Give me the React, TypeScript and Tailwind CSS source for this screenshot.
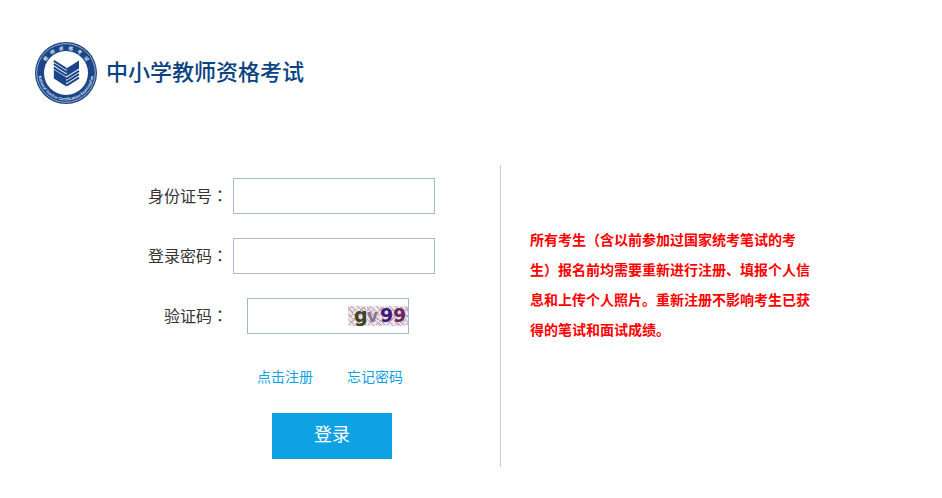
import { useState } from "react";

interface IField {
  id: string;
  label: string;
  type: string;
}

const fields: IField[] = [
  { id: "idCard", label: "身份证号", type: "text" },
  { id: "password", label: "登录密码", type: "password" },
];

const emblemChars = ["教", "师", "资", "格", "考", "试"];

const Emblem = () => (
  <svg viewBox="0 0 62 62" className="size-[62px]" aria-hidden="true">
    <defs>
      <path id="arc-bottom" d="M3.5 31a27.5 27.5 0 0 0 55 0" />
    </defs>
    <circle cx="31" cy="31" r="31" fill="#1c4587" />
    <circle cx="31" cy="31" r="29.3" fill="none" stroke="#b4c4dc" strokeWidth="0.8" />
    <circle cx="31" cy="31" r="22" fill="#fff" />
    <g fill="#dbe5f2" fontFamily="'Noto Sans CJK SC', sans-serif" textAnchor="middle">
      {emblemChars.map((char, i) => (
        <text
          key={char}
          x="31"
          y="7.8"
          fontSize="4.6"
          fontWeight="700"
          transform={`rotate(${(i - 2.5) * 22} 31 31)`}
        >
          {char}
        </text>
      ))}
      <text fontSize="3.8" fontWeight="700">
        <textPath href="#arc-bottom" startOffset="50%">
          National Teacher Certification Examination
        </textPath>
      </text>
    </g>
    <g fill="#1c4587">
      <path d="M44 18.5l-12.6 8v8l12.600-8z" />
      <path d="M18.800 27.500l12.600 8v9l-12.600-8z" />
    </g>
    <g fill="none" stroke="#1c4587" strokeWidth="2">
      <path d="M18.8 18.8l12.6 8M18.8 22.2l12.6 8M18.8 25.6l12.6 8" />
      <path d="M44 28.800l-12.6 8M44 32.2l-12.6 8M44 35.6l-12.6 8" />
    </g>
  </svg>
);

const Captcha = () => (
  <svg viewBox="0 0 60 20" className="h-5 w-[60px] overflow-visible">
    <defs>
      <pattern id="noise" width="19" height="20" patternUnits="userSpaceOnUse">
        <path
          d="M0 1l5 6M3 0l9 8M9 0l8 7M0 8l6 6M11 10l6-5M1 19l7-8M5 15l4-5M10 12l8 7M3 15l4 5M15 10l3 5M14 1l4 3M6 8l5 6M0 5l3-4M12 17l3 3"
          stroke="#b58fb2"
          strokeWidth="0.9"
          fill="none"
        />
        <path
          d="M2 4l4 5M13 2l4 6M0 13l3 3M8 14l5 6M14 14l-5 5M17 1l-6 5M1 11l4-3M7 3l-3 4M16 18l3-4"
          stroke="#9c958f"
          strokeWidth="0.7"
        />
      </pattern>
    </defs>
    <rect width="60" height="20" fill="#f0e4ea" />
    <rect width="60" height="20" fill="url(#noise)" />
    <g fontFamily="'DejaVu Sans', sans-serif" fontSize="19" fontWeight="700">
      <text x="6" y="16" fill="#3c4420">g</text>
      <text x="19" y="16" fill="#84768c" fontSize="17">v</text>
      <text x="32" y="16" fill="#3d1a78">9</text>
      <text x="45" y="16" fill="#642a5c">9</text>
    </g>
  </svg>
);

const FieldLabel = ({ id, label }: { id: string; label: string }) => (
  <label htmlFor={id} className="w-[228px] pb-0.5 text-right text-base">
    {label}
    <span className="font-['Noto_Sans_CJK_TC',sans-serif]">：</span>
  </label>
);

export default function App() {
  const [values, setValues] = useState<Record<string, string>>({});

  const handleChange = (id: string, value: string) => {
    setValues((prev) => ({ ...prev, [id]: value }));
  };

  return (
    <div className="min-h-screen bg-white font-['Noto_Sans_CJK_SC',sans-serif] text-[#333]">
      <header className="flex items-center gap-[9px] px-[35px] pt-[42px]">
        <Emblem />
        <h1 className="pb-1.5 text-[22px] leading-8 font-medium text-[#0a4383]">
          中小学教师资格考试
        </h1>
      </header>

      <main className="flex pt-[61px]">
        <form
          className="w-[501px] border-r border-[#ccc] pt-[13px] pb-2"
          onSubmit={(e) => e.preventDefault()}
        >
          {fields.map(({ id, label, type }) => (
            <div key={id} className="mb-6 flex h-9 items-center gap-[5px]">
              <FieldLabel id={id} label={label} />
              <input
                id={id}
                type={type}
                value={values[id] ?? ""}
                onChange={(e) => handleChange(id, e.target.value)}
                className="h-9 w-[202px] border border-[#a5bacf] px-2 outline-none"
              />
            </div>
          ))}

          <div className="flex h-9 items-center gap-[19px]">
            <FieldLabel id="captcha" label="验证码" />
            <div className="flex h-9 w-[162px] items-center border border-[#a5bacf]">
              <input
                id="captcha"
                type="text"
                value={values.captcha ?? ""}
                onChange={(e) => handleChange("captcha", e.target.value)}
                className="h-full min-w-0 flex-1 px-2 outline-none"
              />
              <Captcha />
            </div>
          </div>

          <div className="mt-[31px] flex gap-[34px] pl-[257px] text-sm leading-[22px] text-[#0ea2e4]">
            <a href="#register">点击注册</a>
            <a href="#forgot">忘记密码</a>
          </div>

          <button
            type="submit"
            className="mt-[26px] ml-[272px] block h-[46px] w-[120px] cursor-pointer bg-[#0ea2e4] pb-1.5 text-lg text-white"
          >
            登录
          </button>
        </form>

        <p className="ml-[29px] w-[284px] pt-[59px] text-sm leading-[30px] font-bold text-[#f00]">
          所有考生（含以前参加过国家统考笔试的考生）报名前均需要重新进行注册、填报个人信息和上传个人照片。重新注册不影响考生已获得的笔试和面试成绩。
        </p>
      </main>
    </div>
  );
}
